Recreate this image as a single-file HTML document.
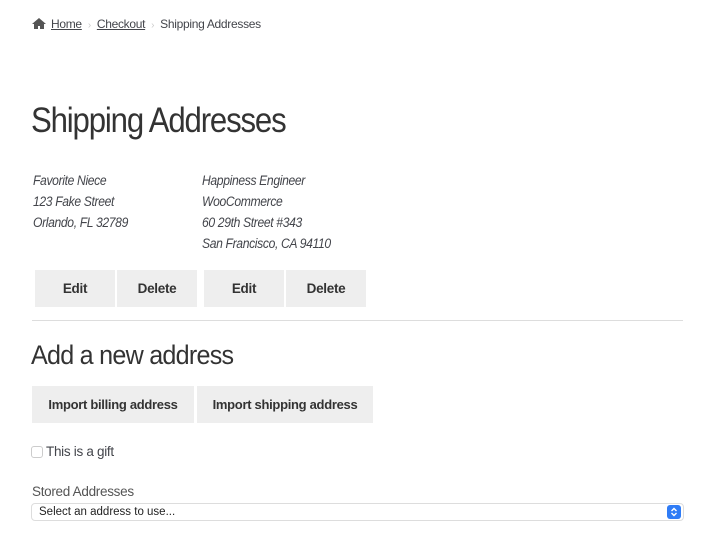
<!DOCTYPE html>
<html><head><meta charset="utf-8"><style>
*{margin:0;padding:0;box-sizing:border-box}
body{width:712px;height:540px;background:#fff;font-family:"Liberation Sans",sans-serif;color:#43454b;position:relative;overflow:hidden}
.a{position:absolute;white-space:nowrap}
.bc{top:17px;left:32px;font-size:12px;letter-spacing:-0.3px;color:#43454b}
.bc u{color:#43454b}
.bc .sep{color:#ccc;margin:0 6px;font-size:10px}
h1{position:absolute;left:31px;top:101px;font-size:35px;font-weight:300;letter-spacing:-1.3px;color:#333;transform:scaleX(0.89);transform-origin:left;white-space:nowrap}
h2{position:absolute;left:31px;top:340px;font-size:27px;font-weight:300;letter-spacing:-0.8px;color:#333;transform:scaleX(0.93);transform-origin:left;white-space:nowrap}
.addr{font-style:italic;font-size:13.5px;line-height:21px;letter-spacing:-0.4px;color:#43454b;top:170px;transform:scaleX(0.9);transform-origin:left}
.btn{position:absolute;background:#eeeeee;font-weight:bold;font-size:13.5px;color:#333;display:flex;align-items:center;justify-content:center;letter-spacing:-0.3px}
.hr{position:absolute;left:32px;top:320px;width:651px;height:1px;background:#ddd}
</style></head><body>
<div class="a bc"><svg width="14" height="11" viewBox="0 0 14 11" style="vertical-align:-1px;margin-right:5px"><path d="M7 0L0 6h2v5h4V8h2v3h4V6h2z" fill="#555"/></svg><u>Home</u><span class="sep">›</span><u>Checkout</u><span class="sep">›</span>Shipping Addresses</div>
<h1>Shipping Addresses</h1>
<div class="a addr" style="left:33px">Favorite Niece<br>123 Fake Street<br>Orlando, FL 32789</div>
<div class="a addr" style="left:202px">Happiness Engineer<br>WooCommerce<br>60 29th Street #343<br>San Francisco, CA 94110</div>
<div class="btn" style="left:35px;top:270px;width:80px;height:37px">Edit</div>
<div class="btn" style="left:117px;top:270px;width:80px;height:37px">Delete</div>
<div class="btn" style="left:204px;top:270px;width:80px;height:37px">Edit</div>
<div class="btn" style="left:286px;top:270px;width:80px;height:37px">Delete</div>
<div class="hr"></div>
<h2>Add a new address</h2>
<div class="btn" style="left:32px;top:386px;width:162px;height:37px;font-size:13px">Import billing address</div>
<div class="btn" style="left:197px;top:386px;width:176px;height:37px;font-size:13px">Import shipping address</div>
<div class="a" style="left:31px;top:446px;width:12px;height:12px;border:1px solid #ccc;border-radius:3px"></div>
<div class="a" style="left:46px;top:444px;font-size:13.5px;letter-spacing:-0.3px">This is a gift</div>
<div class="a" style="left:32px;top:484px;font-size:13.5px;letter-spacing:-0.3px;color:#555">Stored Addresses</div>
<div class="a" style="left:31px;top:503px;width:653px;height:18px;border:1px solid #ddd;border-radius:4px;font-size:11.5px;color:#222;padding:2px 0 0 7px">Select an address to use...</div>
<div class="a" style="left:667px;top:505px;width:14px;height:14px;background:#2f7cf6;border-radius:3px"><svg width="14" height="14" viewBox="0 0 14 14"><path d="M4.5 6L7 3.5 9.5 6M4.5 8L7 10.5 9.5 8" stroke="#fff" stroke-width="1.4" fill="none"/></svg></div>
</body></html>
